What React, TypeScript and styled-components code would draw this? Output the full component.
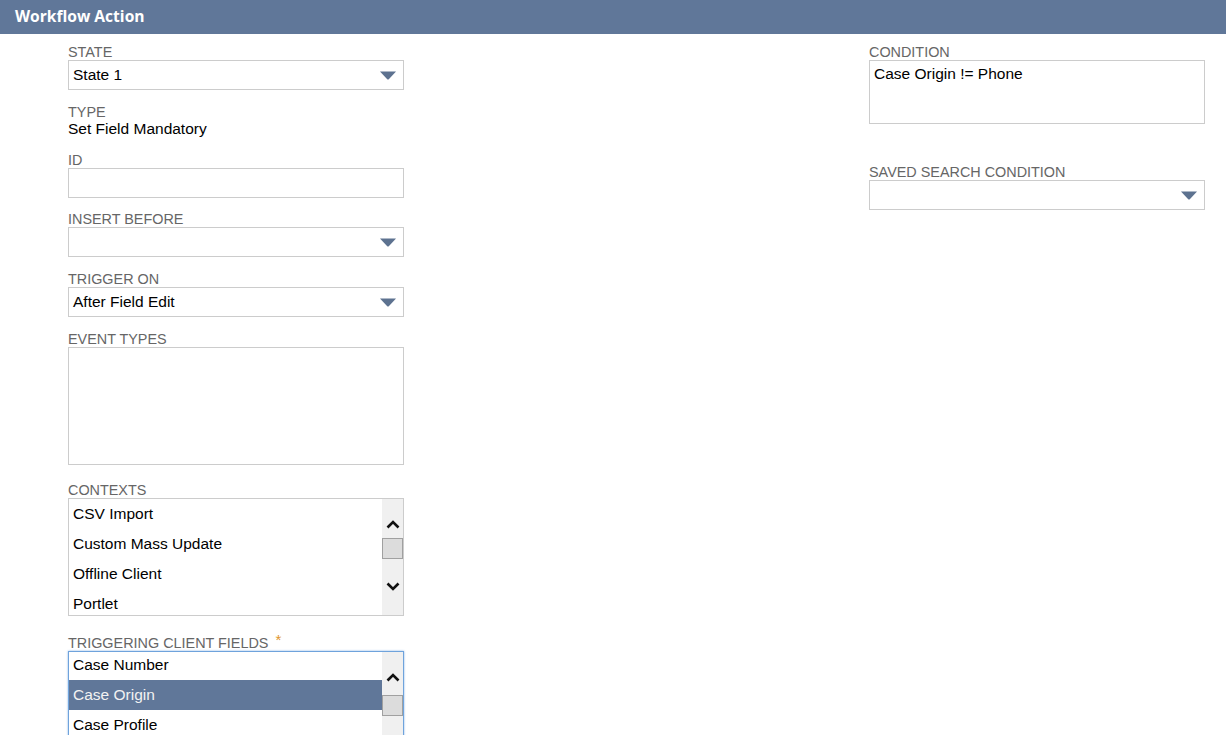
import React from 'react'
import styled, { createGlobalStyle } from 'styled-components'

const GlobalStyle = createGlobalStyle`
    html, body {
        margin: 0;
        padding: 0;
        background: #ffffff;
        overflow: hidden;
    }
    body {
        font-family: "Liberation Sans", Arial, sans-serif;
    }
`

const Page = styled.div`
    width: 1226px;
    height: 735px;
    overflow: hidden;
`

const Header = styled.div`
    height: 34px;
    background-color: #607799;
    color: #ffffff;
    font-family: "Open Sans", "DejaVu Sans", sans-serif;
    font-weight: 700;
    font-size: 15.6px;
    display: flex;
    align-items: center;
    padding-left: 15px;
    padding-bottom: 3px;
    box-sizing: border-box;
`

const Columns = styled.div`
    display: flex;
    justify-content: space-between;
    padding: 11px 21px 0 68px;
`

const Column = styled.div`
    width: 336px;
    display: flex;
    flex-direction: column;
`

const Field = styled.div<{ $gap?: number }>`
    display: flex;
    flex-direction: column;
    margin-bottom: ${p => p.$gap ?? 15}px;
`

const Label = styled.div`
    font-size: 14.4px;
    color: #666666;
    text-transform: uppercase;
    line-height: 14px;
    height: 14px;
    margin-bottom: 1px;
    white-space: nowrap;
`

const Required = styled.span`
    color: #e0962e;
    margin-left: 7px;
    font-size: 15px;
    position: relative;
    top: -3px;
`

const Value = styled.div`
    font-size: 15.5px;
    color: #000000;
    line-height: 18px;
`

const Box = styled.div<{ $h: number; $focus?: boolean }>`
    height: ${p => p.$h}px;
    box-sizing: border-box;
    border: 1px solid ${p => (p.$focus ? '#6fa3dc' : '#cccccc')};
    box-shadow: ${p => (p.$focus ? '0 0 2px #8ab4e6' : 'none')};
    background: #ffffff;
    display: flex;
    position: relative;
    overflow: hidden;
`

const BoxText = styled.div`
    flex: 1;
    font-size: 15.5px;
    color: #000000;
    padding: 3px 4px 0 4px;
    line-height: 20px;
`

const SelectText = styled(BoxText)`
    padding-top: 0;
    display: flex;
    align-items: center;
`

const Caret = styled.div`
    width: 30px;
    display: flex;
    align-items: center;
    justify-content: center;
    padding-top: 1px;
`

const Rows = styled.div<{ $shift?: number }>`
    flex: 1;
    display: flex;
    flex-direction: column;
    margin-top: ${p => p.$shift ?? 0}px;
`

const Row = styled.div<{ $sel?: boolean }>`
    height: 30px;
    flex-shrink: 0;
    display: flex;
    align-items: center;
    padding-left: 4px;
    font-size: 15.5px;
    background: ${p => (p.$sel ? '#607799' : 'transparent')};
    color: ${p => (p.$sel ? '#f2f2f2' : '#000000')};
`

const Scrollbar = styled.div<{ $top: number; $thumbGap: number; $bottom: number }>`
    width: 21px;
    background: #f0f0f0;
    display: flex;
    flex-direction: column;
    align-items: center;
    padding-top: ${p => p.$top}px;
    box-sizing: border-box;

    .thumb {
        margin-top: ${p => p.$thumbGap}px;
    }
    .down {
        margin-top: ${p => p.$bottom}px;
    }
`

const Thumb = styled.div`
    width: 21px;
    height: 21px;
    flex-shrink: 0;
    box-sizing: border-box;
    border: 1px solid #a0a0a0;
    background: #dcdcdc;
`

const CaretIcon = () => (
    <svg width="16" height="9" viewBox="0 0 16 9">
        <path d="M0 0.5 H16 L9 8 Q8 9 7 8 Z" fill="#5d7290" />
    </svg>
)

const Chevron = ({ down, className }: { down?: boolean; className?: string }) => (
    <svg className={className} width="14" height="9" viewBox="0 0 14 9" style={{ flexShrink: 0 }}>
        <path
            d={down ? 'M1.5 1.5 L7 7 L12.5 1.5' : 'M1.5 7.5 L7 2 L12.5 7.5'}
            fill="none"
            stroke="#111111"
            strokeWidth="2.6"
        />
    </svg>
)

const Select = ({ value }: { value?: string }) => (
    <Box $h={30}>
        <SelectText>{value}</SelectText>
        <Caret>
            <CaretIcon />
        </Caret>
    </Box>
)

const contexts = ['CSV Import', 'Custom Mass Update', 'Offline Client', 'Portlet', 'Scheduled']
const clientFields = ['Case Number', 'Case Origin', 'Case Profile', 'Company']

export default function App() {
    return (
        <Page>
            <GlobalStyle />
            <Header>Workflow Action</Header>
            <Columns>
                <Column>
                    <Field>
                        <Label>State</Label>
                        <Select value="State 1" />
                    </Field>
                    <Field>
                        <Label>Type</Label>
                        <Value>Set Field Mandatory</Value>
                    </Field>
                    <Field $gap={14}>
                        <Label>ID</Label>
                        <Box $h={30} />
                    </Field>
                    <Field>
                        <Label>Insert Before</Label>
                        <Select />
                    </Field>
                    <Field>
                        <Label>Trigger On</Label>
                        <Select value="After Field Edit" />
                    </Field>
                    <Field $gap={18}>
                        <Label>Event Types</Label>
                        <Box $h={118} />
                    </Field>
                    <Field $gap={20}>
                        <Label>Contexts</Label>
                        <Box $h={118}>
                            <Rows>
                                {contexts.map(c => (
                                    <Row key={c}>{c}</Row>
                                ))}
                            </Rows>
                            <Scrollbar $top={21} $thumbGap={9} $bottom={23}>
                                <Chevron />
                                <Thumb className="thumb" />
                                <Chevron down className="down" />
                            </Scrollbar>
                        </Box>
                    </Field>
                    <Field>
                        <Label>
                            Triggering Client Fields<Required>*</Required>
                        </Label>
                        <Box $h={118} $focus>
                            <Rows $shift={-2}>
                                {clientFields.map(c => (
                                    <Row key={c} $sel={c === 'Case Origin'}>
                                        {c}
                                    </Row>
                                ))}
                            </Rows>
                            <Scrollbar $top={21} $thumbGap={13} $bottom={20}>
                                <Chevron />
                                <Thumb className="thumb" />
                                <Chevron down className="down" />
                            </Scrollbar>
                        </Box>
                    </Field>
                </Column>
                <Column>
                    <Field $gap={41}>
                        <Label>Condition</Label>
                        <Box $h={64}>
                            <BoxText>Case Origin != Phone</BoxText>
                        </Box>
                    </Field>
                    <Field>
                        <Label>Saved Search Condition</Label>
                        <Select />
                    </Field>
                </Column>
            </Columns>
        </Page>
    )
}
